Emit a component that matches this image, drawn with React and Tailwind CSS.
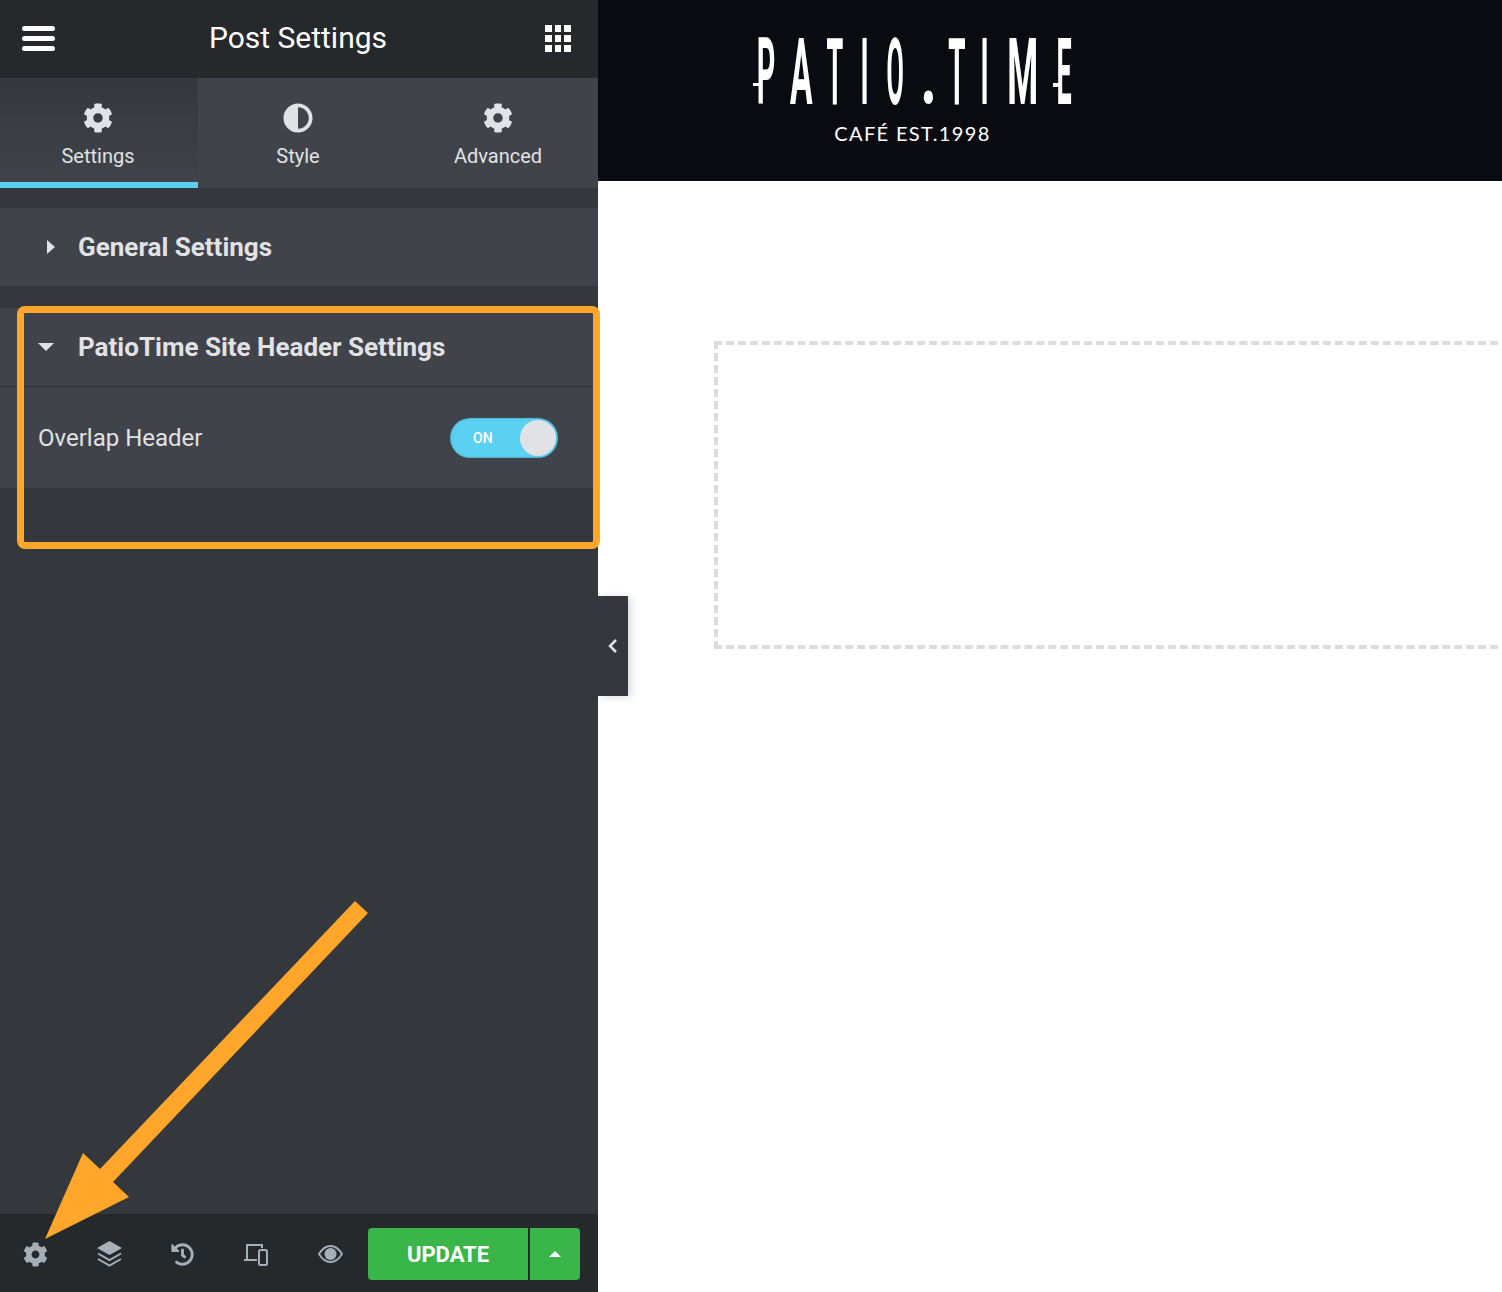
import React from "react";
import { FaCog, FaAdjust, FaHistory } from "react-icons/fa";

function Letter({ c, box, scale }) {
  return (
    <div className={`flex h-[66px] justify-center ${box}`}>
      <span className={`shrink-0 pt-[2px] text-[93px] font-bold leading-[66px] text-white ${scale}`}>{c}</span>
    </div>
  );
}

function Logo() {
  return (
    <div className="relative flex h-[66px]">
      <Letter c="P" box="ml-[4px] w-[18px]" scale="scale-x-[.31]" />
      <Letter c="A" box="ml-[15px] w-[22px]" scale="scale-x-[.36]" />
      <Letter c="T" box="ml-[15px] w-[16px]" scale="scale-x-[.29]" />
      <Letter c="I" box="ml-[19px] w-[5px]" scale="scale-x-[.3]" />
      <Letter c="O" box="ml-[20px] w-[16px]" scale="scale-x-[.27]" />
      <Letter c="." box="ml-[20px] w-[10px]" scale="scale-x-[.62]" />
      <Letter c="T" box="ml-[15px] w-[17px]" scale="scale-x-[.3]" />
      <Letter c="I" box="ml-[17px] w-[5px]" scale="scale-x-[.3]" />
      <Letter c="M" box="ml-[21px] w-[30px]" scale="scale-x-[.38]" />
      <Letter c="E" box="ml-[19px] w-[15px]" scale="scale-x-[.29]" />
      {/* little crossbars of the logo lettering */}
      <div className="absolute left-0 top-[45px] h-[3px] w-[8px] bg-white" />
      <div className="absolute left-[300px] top-[45px] h-[4px] w-[8px] bg-white" />
    </div>
  );
}

function Tab({ icon, label, active }) {
  return (
    <div
      className={`flex h-[110px] flex-col items-center pt-[25px] text-[#e0e2e5] ${
        active ? "w-[198px] border-b-[6px] border-[#5bd0f0] bg-gradient-to-b from-[#34383c] to-[#404349] pr-[2px]" : "w-[200px]"
      }`}
    >
      {icon}
      <span className="mt-[9px] text-[20px] leading-[28px]">{label}</span>
    </div>
  );
}

export default function App() {
  return (
    <div className="relative flex h-[1292px] w-full overflow-hidden bg-white" style={{ fontFamily: "Roboto, sans-serif" }}>
      {/* sidebar */}
      <div className="flex w-[598px] shrink-0 flex-col bg-[#34383c]">
        <div className="flex h-[78px] items-center justify-between bg-[#26292c] pb-[2px] pl-[22px] pr-[27px]">
          <div className="flex w-[33px] flex-col gap-[5px]">
            <div className="h-[5px] rounded-full bg-white" />
            <div className="h-[5px] rounded-full bg-white" />
            <div className="h-[5px] rounded-full bg-white" />
          </div>
          <span className="mr-[4px] text-[30px] leading-none text-white">Post Settings</span>
          <div className="grid w-[26px] grid-cols-3 gap-[3px]">
            {[0, 1, 2, 3, 4, 5, 6, 7, 8].map((i) => (
              <div key={i} className="h-[7px] bg-white" />
            ))}
          </div>
        </div>

        <div className="flex h-[110px] bg-[#404349]">
          <Tab active label="Settings" icon={<FaCog className="h-[30px] w-[30px]" />} />
          <Tab label="Style" icon={<FaAdjust className="h-[30px] w-[30px]" />} />
          <Tab label="Advanced" icon={<FaCog className="h-[30px] w-[30px]" />} />
        </div>

        <div className="mt-[20px] flex h-[78px] items-center bg-[#404349] pl-[47px]">
          <div className="h-0 w-0 border-y-[7px] border-l-[8px] border-y-transparent border-l-[#e0e2e5]" />
          <span className="ml-[23px] text-[26px] font-bold text-[#e0e2e5]">General Settings</span>
        </div>

        <div className="mt-[22px] flex h-[79px] items-center border-b border-[#2c2f33] bg-[#404349] pl-[38px]">
          <div className="h-0 w-0 border-x-[8px] border-t-[8px] border-x-transparent border-t-[#e0e2e5]" />
          <span className="ml-[24px] text-[26px] font-bold text-[#e0e2e5]">PatioTime Site Header Settings</span>
        </div>
        <div className="flex h-[101px] items-center justify-between bg-[#404349] pl-[38px] pr-[40px]">
          <span className="text-[24px] text-[#e0e2e5]">Overlap Header</span>
          <div className="relative flex h-[40px] w-[108px] items-center rounded-full bg-[#5bd0f0] pl-[23px] pt-[1px] shadow-[inset_0_0_2px_rgba(0,0,0,0.4)]">
            <span className="text-[14px] font-medium text-white">ON</span>
            <div className="absolute right-[2px] top-[2px] h-[36px] w-[36px] rounded-full bg-[#e0e2e5]" />
          </div>
        </div>

        <div className="mt-auto flex h-[78px] items-center bg-[#26292c] pl-[23px] pr-[18px] pt-[2px] text-[#a4afb7]">
          <FaCog className="h-[25px] w-[25px]" />
          <svg className="ml-[49px]" width="25" height="26" viewBox="0 0 25 26" fill="none" stroke="currentColor" strokeWidth="2">
            <polygon points="12.5,0 25,7 12.5,14 0,7" fill="currentColor" stroke="none" />
            <path d="M1 12.5l11.5 6.5L24 12.5" />
            <path d="M1 18l11.5 6.5L24 18" />
          </svg>
          <FaHistory className="ml-[49px] h-[23px] w-[23px]" />
          <svg className="ml-[50px]" width="25" height="24" viewBox="0 0 25 24" fill="none" stroke="currentColor" strokeWidth="2">
            <path d="M3 17V3h15v3" />
            <path d="M0 18h13" />
            <rect x="15" y="8" width="8" height="15" rx="1.5" />
          </svg>
          <svg className="ml-[49px]" width="25" height="18" viewBox="0 0 25 18" fill="none">
            <path d="M1 9c3-5 7-8 11.5-8S21 4 24 9c-3 5-7 8-11.5 8S4 14 1 9z" stroke="currentColor" strokeWidth="1.8" />
            <circle cx="12.5" cy="9" r="6" fill="currentColor" />
          </svg>
          <div className="ml-[25px] flex h-[52px] w-[160px] items-center justify-center rounded-l-[4px] bg-[#39b54a] text-[22px] font-bold text-white">
            UPDATE
          </div>
          <div className="ml-[2px] flex h-[52px] w-[50px] items-center justify-center rounded-r-[4px] bg-[#39b54a]">
            <div className="h-0 w-0 border-x-[6px] border-b-[6px] border-x-transparent border-b-white" />
          </div>
        </div>
      </div>

      {/* preview */}
      <div className="min-w-0 flex-1">
        <div className="h-[181px] bg-[#0a0b10] pl-[155px] pt-[38px]">
          <Logo />
          <div className="mt-[17px] w-[319px] text-center text-[20px] leading-[24px] tracking-[1.35px] text-white" style={{ fontFamily: "Lato, sans-serif" }}>
            CAFÉ EST.1998
          </div>
        </div>
        <div className="-mr-[20px] ml-[116px] mt-[160px] h-[308px] border-4 border-dashed border-[#dcdcdc]" />
      </div>

      {/* collapse handle */}
      <div className="absolute left-[598px] top-[596px] flex h-[100px] w-[30px] items-center justify-center bg-[#34383c] shadow-[3px_1px_8px_rgba(0,0,0,0.15)]">
        <svg width="10" height="16" viewBox="0 0 10 16" fill="none" stroke="#e0e2e5" strokeWidth="2.5">
          <path d="M8 2 2 8l6 6" />
        </svg>
      </div>

      {/* orange annotation */}
      <div className="absolute left-[17px] top-[306px] h-[243px] w-[583px] rounded-[8px] border-[7px] border-[#ffa62b]" />
      <svg className="absolute left-0 top-0" width="400" height="1292" viewBox="0 0 400 1292">
        <polygon points="355,901 368,913 113,1182 129,1197 45,1239 83,1153 100,1169" fill="#ffa62b" />
      </svg>
    </div>
  );
}
